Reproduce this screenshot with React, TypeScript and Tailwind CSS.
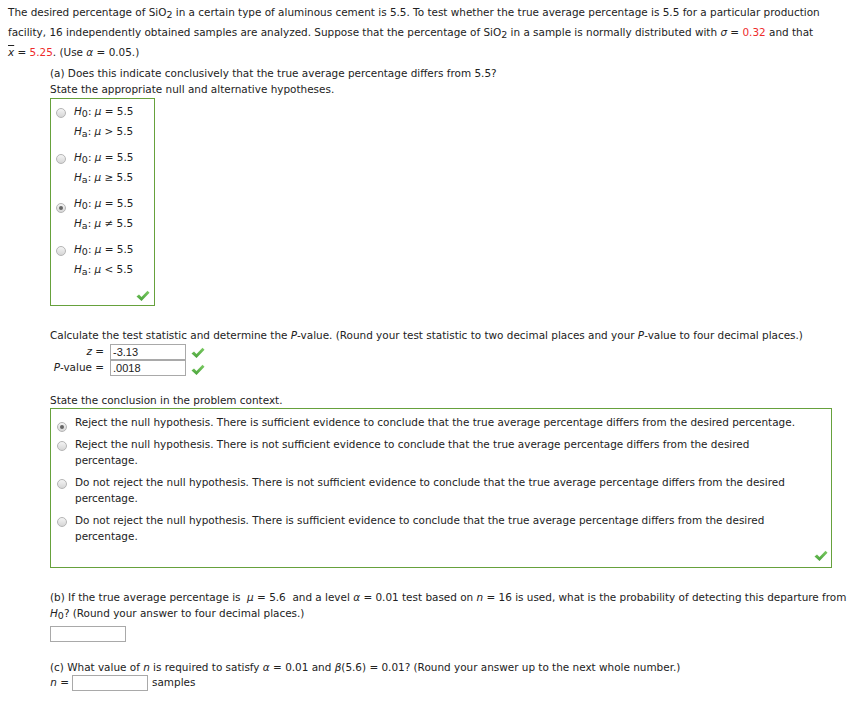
import React from "react";

const Check = () => (
  <svg width="14" height="12" viewBox="0 0 14 12" className="inline-block">
    <defs>
      <linearGradient id="cg" x1="0" y1="0" x2="0" y2="1">
        <stop offset="0" stopColor="#7ccb63" />
        <stop offset="1" stopColor="#48a23a" />
      </linearGradient>
    </defs>
    <path d="M0.5 6.5 L3 4.5 L5.5 7 L11.5 0.8 L13.5 2.8 L5.5 11 Z" fill="url(#cg)" />
  </svg>
);

const Radio = ({ on }: { on?: boolean }) => (
  <span className="inline-flex items-center justify-center w-[10px] h-[10px] rounded-full border border-[#b5b5b5] bg-gradient-to-b from-[#f4f4f4] to-[#d6d6d6] shrink-0">
    {on && <span className="block w-[4px] h-[4px] rounded-full bg-[#666]" />}
  </span>
);

const Mu = () => <i>μ</i>;
const H = ({ s }: { s: string }) => (
  <span>
    <i>H</i>
    <sub className="text-[9.5px] relative top-[2px] align-baseline">{s}</sub>
  </span>
);

const Red = ({ children }: { children: React.ReactNode }) => (
  <span className="text-[#ee2b2b]">{children}</span>
);

const Hyp = ({ op, on }: { op: string; on?: boolean }) => (
  <div className="flex flex-col">
    <div className="flex items-center h-[20px] relative whitespace-nowrap">
      <span className="absolute left-[-18px] top-[5px]">
        <Radio on={on} />
      </span>
      <span>
        <H s="0" />: <Mu /> = 5.5
      </span>
    </div>
    <div className="h-[20px] flex items-center whitespace-nowrap">
      <span>
        <H s="a" />: <Mu /> {op} 5.5
      </span>
    </div>
  </div>
);

const Concl = ({ on, lines }: { on?: boolean; lines: string[] }) => (
  <div className="relative leading-[16px]">
    <span className="absolute left-[-18px] top-[3px]">
      <Radio on={on} />
    </span>
    {lines.map((l, i) => (
      <div key={i} className="whitespace-nowrap">
        {l}
      </div>
    ))}
  </div>
);

const Input = ({ w, v }: { w: string; v?: string }) => (
  <span
    className={`inline-block ${w} h-[16px] border border-[#a9a9a9] bg-white text-[11px] leading-[14px] pl-[2px] text-[#222] align-middle shrink-0`}
    style={{ fontFamily: '"Liberation Sans", Arial, sans-serif' }}
  >
    {v}
  </span>
);

export default function App() {
  return (
    <div
      className="w-[862px] h-[725px] bg-white text-[#222] text-[10.45px] overflow-hidden"
      style={{ fontFamily: '"DejaVu Sans", Verdana, sans-serif' }}
    >
      <div className="pl-[8px] pt-[3px] whitespace-nowrap">
        <div className="h-[19px] leading-[19px]">
          The desired percentage of SiO<sub className="text-[9.5px] relative top-[2px] align-baseline">2</sub> in a certain type of aluminous cement is 5.5. To test whether the true average percentage is 5.5 for a particular production
        </div>
        <div className="h-[20px] leading-[20px]">
          facility, 16 independently obtained samples are analyzed. Suppose that the percentage of SiO<sub className="text-[9.5px] relative top-[2px] align-baseline">2</sub> in a sample is normally distributed with <i>σ</i> = <Red>0.32</Red> and that
        </div>
        <div className="h-[20px] leading-[21px]">
          <i className="overline">x</i> = <Red>5.25</Red>. (Use <i>α</i> = 0.05.)
        </div>
      </div>

      <div className="pl-[50px]">
        <div className="leading-[16px] mt-[3px] whitespace-nowrap">
          <div>(a) Does this indicate conclusively that the true average percentage differs from 5.5?</div>
          <div>State the appropriate null and alternative hypotheses.</div>
        </div>
        <div className="mt-[1px] w-[105px] h-[208px] border border-[#66a13c] pl-[23px] pt-[3px] flex flex-col gap-[6px] relative">
          <Hyp op=">" />
          <Hyp op="≥" />
          <Hyp op="≠" on />
          <Hyp op="<" />
          <span className="absolute right-[4px] bottom-[1px]">
            <Check />
          </span>
        </div>

        <div className="mt-[21px] leading-[16px] whitespace-nowrap">
          Calculate the test statistic and determine the <i>P</i>-value. (Round your test statistic to two decimal places and your <i>P</i>-value to four decimal places.)
        </div>
        <div className="flex items-center h-[16px] mt-[1px]">
          <span className="w-[60px] text-right pr-[6px] whitespace-nowrap">
            <i>z</i> =
          </span>
          <Input w="w-[76px]" v="-3.13" />
          <span className="ml-[5px] mt-[2px]">
            <Check />
          </span>
        </div>
        <div className="flex items-center h-[16px]">
          <span className="w-[60px] text-right pr-[6px] whitespace-nowrap">
            <i>P</i>-value =
          </span>
          <Input w="w-[76px]" v=".0018" />
          <span className="ml-[5px] mt-[4px]">
            <Check />
          </span>
        </div>

        <div className="mt-[16px] leading-[16px]">State the conclusion in the problem context.</div>
        <div className="w-[782px] h-[160px] border border-[#66a13c] pl-[24px] pt-[5px] flex flex-col gap-[6px] relative">
          <Concl
            on
            lines={[
              "Reject the null hypothesis. There is sufficient evidence to conclude that the true average percentage differs from the desired percentage.",
            ]}
          />
          <Concl
            lines={[
              "Reject the null hypothesis. There is not sufficient evidence to conclude that the true average percentage differs from the desired",
              "percentage.",
            ]}
          />
          <Concl
            lines={[
              "Do not reject the null hypothesis. There is not sufficient evidence to conclude that the true average percentage differs from the desired",
              "percentage.",
            ]}
          />
          <Concl
            lines={[
              "Do not reject the null hypothesis. There is sufficient evidence to conclude that the true average percentage differs from the desired",
              "percentage.",
            ]}
          />
          <span className="absolute right-[3px] bottom-[3px]">
            <Check />
          </span>
        </div>

        <div className="mt-[21px] leading-[16px] whitespace-nowrap">
          <div>
            (b) If the true average percentage is&nbsp; <Mu /> = 5.6&nbsp; and a level <i>α</i> = 0.01 test based on <i>n</i> = 16 is used, what is the probability of detecting this departure from
          </div>
          <div>
            <H s="0" />? (Round your answer to four decimal places.)
          </div>
        </div>
        <div className="mt-[5px] flex">
          <Input w="w-[76px]" />
        </div>

        <div className="mt-[17px] leading-[16px] whitespace-nowrap">
          (c) What value of <i>n</i> is required to satisfy <i>α</i> = 0.01 and <i>β</i>(5.6) = 0.01? (Round your answer up to the next whole number.)
        </div>
        <div className="flex items-center h-[16px]">
          <span className="w-[22px] text-right pr-[3px] whitespace-nowrap">
            <i>n</i> =
          </span>
          <Input w="w-[76px]" />
          <span className="ml-[4px]">samples</span>
        </div>
      </div>
    </div>
  );
}
